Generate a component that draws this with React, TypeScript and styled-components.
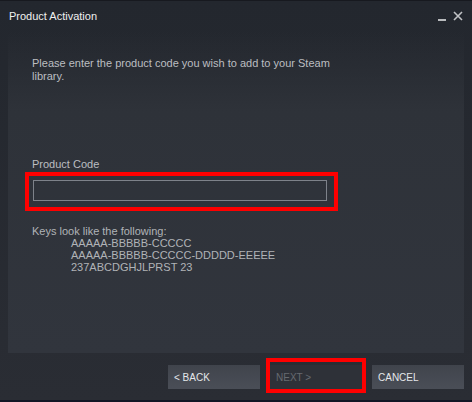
import React from "react";
import styled, { createGlobalStyle } from "styled-components";

const Global = createGlobalStyle`
  html, body { margin: 0; padding: 0; background: #262a31; }
  body { font-family: Arial, "Liberation Sans", sans-serif; }
`;

const Window = styled.div`
  width: 472px;
  height: 402px;
  display: flex;
  flex-direction: column;
  background: linear-gradient(to bottom, #23272e 0%, #2a2d34 100%);
  border-top: 1px solid #17191f;
  border-bottom: 2px solid #111725;
  box-sizing: border-box;
  overflow: hidden;
`;

const TitleBar = styled.div`
  height: 30px;
  display: flex;
  align-items: center;
  padding: 0 9px;
  flex-shrink: 0;
`;

const Title = styled.div`
  flex: 1;
  font-size: 11px;
  line-height: 13px;
  color: #f0f0f0;
  padding-top: 1px;
`;

const Controls = styled.div`
  display: flex;
  align-items: flex-start;
  gap: 7px;
  height: 12px;
  margin-top: 2px;
`;

const MinBar = styled.div`
  width: 8px;
  height: 2px;
  background: #b9bbbe;
  margin-top: 8px;
`;

const Panel = styled.div`
  margin: 0 8px;
  height: 322px;
  padding: 26px 24px 0;
  box-sizing: border-box;
  background: linear-gradient(to bottom, rgba(49, 53, 61, 0) 0%, #2e3239 25%, #31353d 100%);
  display: flex;
  flex-direction: column;
`;

const Desc = styled.p`
  margin: 0;
  width: 300px;
  font-size: 11px;
  line-height: 13px;
  color: #bcbec1;
`;

const Label = styled.div`
  margin-top: 75px;
  font-size: 11px;
  line-height: 13px;
  color: #bcbec1;
`;

const Highlight = styled.div<{ $padding: string }>`
  border: 4px solid #ff0000;
  padding: ${(p) => p.$padding};
  align-self: flex-start;
  display: flex;
`;

const CodeBox = styled(Highlight)`
  margin: 1px 0 0 -7px;
`;

const Input = styled.input`
  width: 294px;
  height: 21px;
  box-sizing: border-box;
  border: 1px solid #7e828a;
  background: transparent;
  outline: none;
  color: #ddd;
  font-size: 11px;
  padding: 0 4px;
`;

const Keys = styled.div`
  margin-top: 14px;
  font-size: 11px;
  line-height: 12px;
  color: #b0b3b7;
`;

const KeyLine = styled.div<{ $indent?: boolean }>`
  padding-left: ${(p) => (p.$indent ? "39px" : "0")};
`;

const Footer = styled.div`
  flex: 1;
  display: flex;
  align-items: flex-start;
  justify-content: flex-end;
  padding: 5px 8px 0 0;
  gap: 6px;
`;

const Button = styled.button<{ $disabled?: boolean }>`
  width: 92px;
  height: 24px;
  border: none;
  padding: 0 0 0 6px;
  text-align: left;
  font-family: Arial, "Liberation Sans", sans-serif;
  font-size: 10px;
  color: ${(p) => (p.$disabled ? "#666a70" : "#e4e7ea")};
  background: ${(p) =>
    p.$disabled ? "#2e3138" : "linear-gradient(to bottom, #40444c 0%, #4a4e57 100%)"};
  cursor: default;
`;

const SideButton = styled(Button)`
  margin-top: 7px;
`;

export default function App() {
  return (
    <>
      <Global />
      <Window>
        <TitleBar>
          <Title>Product Activation</Title>
          <Controls>
            <MinBar />
            <svg width="10" height="10" viewBox="0 0 10 10">
              <path d="M1 1 L9 9 M9 1 L1 9" stroke="#c1c3c6" strokeWidth="1.6" />
            </svg>
          </Controls>
        </TitleBar>
        <Panel>
          <Desc>Please enter the product code you wish to add to your Steam library.</Desc>
          <Label>Product Code</Label>
          <CodeBox $padding="4px 7px 6px 4px">
            <Input />
          </CodeBox>
          <Keys>
            <KeyLine>Keys look like the following:</KeyLine>
            <KeyLine $indent>AAAAA-BBBBB-CCCCC</KeyLine>
            <KeyLine $indent>AAAAA-BBBBB-CCCCC-DDDDD-EEEEE</KeyLine>
            <KeyLine $indent>237ABCDGHJLPRST 23</KeyLine>
          </Keys>
        </Panel>
        <Footer>
          <SideButton>&lt; BACK</SideButton>
          <Highlight $padding="3px 0 0 0">
            <Button $disabled>NEXT &gt;</Button>
          </Highlight>
          <SideButton>CANCEL</SideButton>
        </Footer>
      </Window>
    </>
  );
}
